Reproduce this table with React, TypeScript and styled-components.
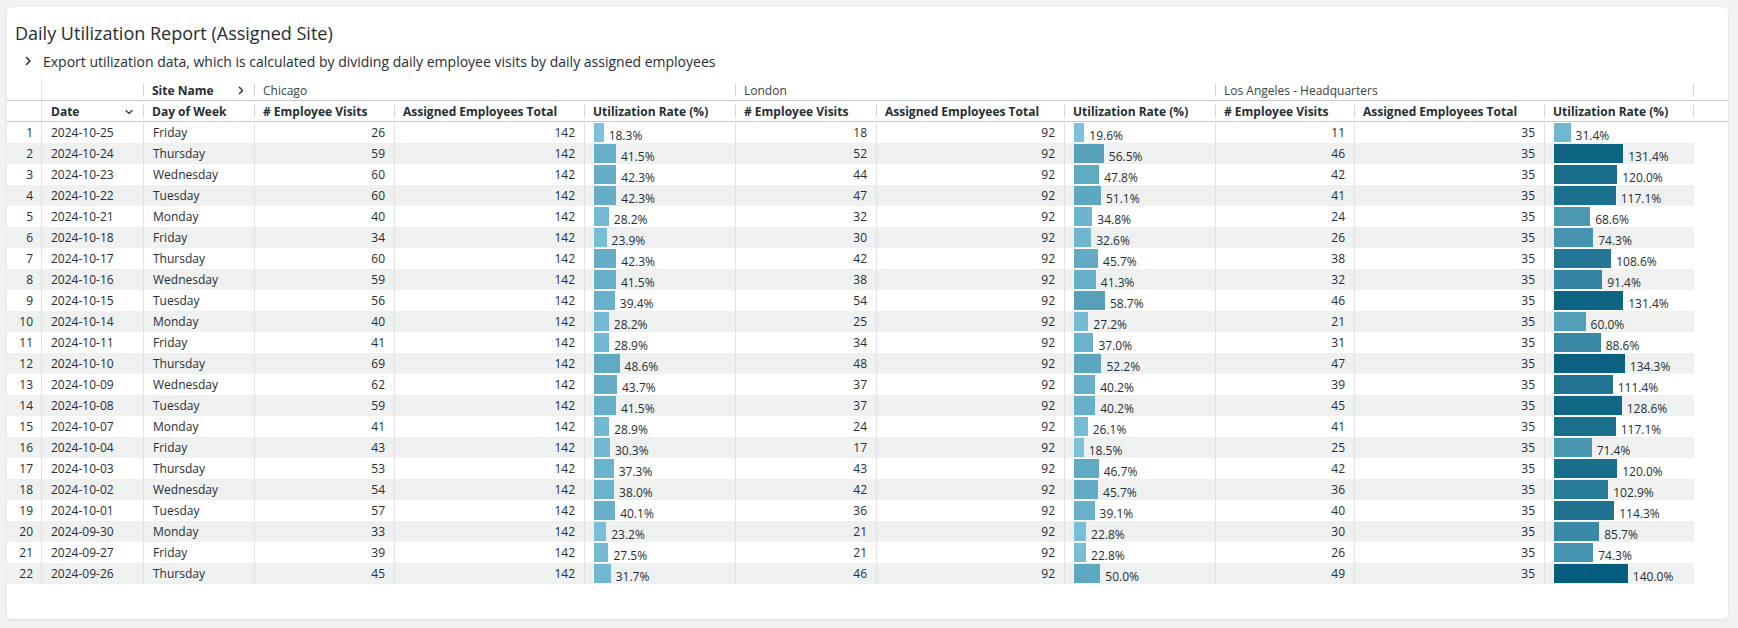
import React from 'react';
import styled, { createGlobalStyle } from 'styled-components';

type Row = {
  date: string;
  day: string;
  chicago: number;
  london: number;
  la: number;
};

const rows: Row[] = [
  { date: '2024-10-25', day: 'Friday', chicago: 26, london: 18, la: 11 },
  { date: '2024-10-24', day: 'Thursday', chicago: 59, london: 52, la: 46 },
  { date: '2024-10-23', day: 'Wednesday', chicago: 60, london: 44, la: 42 },
  { date: '2024-10-22', day: 'Tuesday', chicago: 60, london: 47, la: 41 },
  { date: '2024-10-21', day: 'Monday', chicago: 40, london: 32, la: 24 },
  { date: '2024-10-18', day: 'Friday', chicago: 34, london: 30, la: 26 },
  { date: '2024-10-17', day: 'Thursday', chicago: 60, london: 42, la: 38 },
  { date: '2024-10-16', day: 'Wednesday', chicago: 59, london: 38, la: 32 },
  { date: '2024-10-15', day: 'Tuesday', chicago: 56, london: 54, la: 46 },
  { date: '2024-10-14', day: 'Monday', chicago: 40, london: 25, la: 21 },
  { date: '2024-10-11', day: 'Friday', chicago: 41, london: 34, la: 31 },
  { date: '2024-10-10', day: 'Thursday', chicago: 69, london: 48, la: 47 },
  { date: '2024-10-09', day: 'Wednesday', chicago: 62, london: 37, la: 39 },
  { date: '2024-10-08', day: 'Tuesday', chicago: 59, london: 37, la: 45 },
  { date: '2024-10-07', day: 'Monday', chicago: 41, london: 24, la: 41 },
  { date: '2024-10-04', day: 'Friday', chicago: 43, london: 17, la: 25 },
  { date: '2024-10-03', day: 'Thursday', chicago: 53, london: 43, la: 42 },
  { date: '2024-10-02', day: 'Wednesday', chicago: 54, london: 42, la: 36 },
  { date: '2024-10-01', day: 'Tuesday', chicago: 57, london: 36, la: 40 },
  { date: '2024-09-30', day: 'Monday', chicago: 33, london: 21, la: 30 },
  { date: '2024-09-27', day: 'Friday', chicago: 39, london: 21, la: 26 },
  { date: '2024-09-26', day: 'Thursday', chicago: 45, london: 46, la: 49 },
];

const sites = [
  { key: 'chicago' as const, name: 'Chicago', assigned: 142 },
  { key: 'london' as const, name: 'London', assigned: 92 },
  { key: 'la' as const, name: 'Los Angeles - Headquarters', assigned: 35 },
];

const COLS =
  '35px 101px 111px 140px 190px 151px 141px 188px 151px 139px 190px 150px';

const LOW = [126, 194, 218];
const HIGH = [4, 93, 124];

const barColor = (pct: number) => {
  const t = Math.min(1, Math.max(0, (pct - 18.3) / (140 - 18.3)));
  const c = LOW.map((l, i) => Math.round(l + (HIGH[i] - l) * t));
  return `rgb(${c[0]}, ${c[1]}, ${c[2]})`;
};

const GlobalStyle = createGlobalStyle`
  html, body {
    margin: 0;
    padding: 0;
    background: #f1f2f4;
  }
  body {
    font-family: 'Open Sans', 'Noto Sans', sans-serif;
    color: #262d33;
  }
  * {
    box-sizing: border-box;
  }
`;

const Page = styled.div`
  padding: 7px;
  height: 628px;
`;

const Card = styled.div`
  width: 1721px;
  height: 612px;
  background: #ffffff;
  border-radius: 5px;
  box-shadow: 0 1px 3px rgba(30, 40, 50, 0.1);
  padding-top: 14px;
  overflow: hidden;
`;

const Title = styled.h1`
  margin: 0;
  padding-left: 8px;
  font-size: 18px;
  line-height: 24px;
  font-weight: 400;
  color: #262d33;
`;

const Description = styled.div`
  display: flex;
  align-items: center;
  gap: 11px;
  height: 24px;
  margin-top: 4px;
  padding-left: 18px;
  font-size: 14px;
  color: #262d33;
`;

const Table = styled.div`
  margin-top: 6px;
`;

const HeaderRow = styled.div<{ $height: number }>`
  display: grid;
  grid-template-columns: ${COLS} 1fr;
  height: ${({ $height }) => $height}px;
  border-bottom: 1px solid #c8cbce;
`;

const HeadCell = styled.div<{
  $span?: number;
  $sep?: boolean;
  $end?: boolean;
  $bold?: boolean;
  $rule?: boolean;
}>`
  position: relative;
  display: flex;
  align-items: center;
  justify-content: space-between;
  grid-column: span ${({ $span }) => $span ?? 1};
  padding: 1px 10px 0 9px;
  font-size: 12px;
  font-weight: ${({ $bold }) => ($bold ? 700 : 400)};
  color: ${({ $bold }) => ($bold ? '#262d33' : '#3b4247')};
  white-space: nowrap;
  border-right: ${({ $rule }) => ($rule ? '1px solid #dfe1e3' : 'none')};

  &::before {
    content: '';
    display: ${({ $sep }) => ($sep ? 'block' : 'none')};
    position: absolute;
    left: 0;
    top: 50%;
    width: 1px;
    height: 13px;
    transform: translateY(-50%);
    background: #d3d6d9;
  }

  &::after {
    content: '';
    display: ${({ $end }) => ($end ? 'block' : 'none')};
    position: absolute;
    right: 0;
    top: 50%;
    width: 1px;
    height: 13px;
    transform: translateY(-50%);
    background: #d3d6d9;
  }
`;

const BodyRow = styled.div<{ $striped: boolean }>`
  display: grid;
  grid-template-columns: ${COLS};
  width: 1687px;
  height: 21px;
  background: ${({ $striped }) => ($striped ? '#eff1f1' : 'transparent')};
`;

const Cell = styled.div<{ $align?: 'left' | 'right'; $rule?: boolean }>`
  display: flex;
  align-items: center;
  justify-content: ${({ $align }) =>
    $align === 'right' ? 'flex-end' : 'flex-start'};
  padding: 0 9px 0 9px;
  font-size: 12px;
  color: #262d33;
  white-space: nowrap;
  border-left: ${({ $rule }) => ($rule ? '1px solid #e0e2e4' : 'none')};
`;

const IndexCell = styled(Cell)`
  padding: 0 8px 0 0;
  border-right: 1px solid #dfe1e3;
`;

const BarCell = styled.div`
  display: flex;
  align-items: flex-end;
  padding-left: 9px;
  border-left: 1px solid #e0e2e4;
`;

const Bar = styled.div`
  height: 19px;
  margin-bottom: 1px;
  flex-shrink: 0;
`;

const BarLabel = styled.span`
  margin-left: 5px;
  font-size: 12px;
  line-height: 14px;
  color: #262d33;
`;

const ChevronRight = ({ size = 9 }: { size?: number }) => (
  <svg width={size * 0.7} height={size} viewBox="0 0 7 10" fill="none">
    <path
      d="M1.5 1.5L5 5L1.5 8.5"
      stroke="#262d33"
      strokeWidth="1.5"
      strokeLinecap="round"
      strokeLinejoin="round"
    />
  </svg>
);

const ChevronDown = () => (
  <svg width="8" height="6" viewBox="0 0 8 6" fill="none">
    <path
      d="M1 1.5L4 4.5L7 1.5"
      stroke="#3b4247"
      strokeWidth="1.3"
      strokeLinecap="round"
      strokeLinejoin="round"
    />
  </svg>
);

const UtilBar: React.FC<{ visits: number; assigned: number }> = ({
  visits,
  assigned,
}) => {
  const pct = (visits / assigned) * 100;
  return (
    <BarCell>
      <Bar style={{ width: pct * 0.527, background: barColor(pct) }} />
      <BarLabel>{pct.toFixed(1)}%</BarLabel>
    </BarCell>
  );
};

export default function App() {
  return (
    <>
      <GlobalStyle />
      <Page>
        <Card>
          <Title>Daily Utilization Report (Assigned Site)</Title>
          <Description>
            <ChevronRight size={10} />
            <span>
              Export utilization data, which is calculated by dividing daily
              employee visits by daily assigned employees
            </span>
          </Description>
          <Table>
            <HeaderRow $height={22}>
              <HeadCell $rule />
              <HeadCell />
              <HeadCell $sep $bold>
                Site Name
                <ChevronRight />
              </HeadCell>
              {sites.map((s, i) => (
                <HeadCell key={s.key} $span={3} $sep $end={i === sites.length - 1}>
                  {s.name}
                </HeadCell>
              ))}
              <HeadCell />
            </HeaderRow>
            <HeaderRow $height={21}>
              <HeadCell $rule />
              <HeadCell $bold>
                Date
                <ChevronDown />
              </HeadCell>
              <HeadCell $sep $bold>
                Day of Week
              </HeadCell>
              {sites.map((s, i) => (
                <React.Fragment key={s.key}>
                  <HeadCell $sep $bold>
                    # Employee Visits
                  </HeadCell>
                  <HeadCell $sep $bold>
                    Assigned Employees Total
                  </HeadCell>
                  <HeadCell $sep $bold $end={i === sites.length - 1}>
                    Utilization Rate (%)
                  </HeadCell>
                </React.Fragment>
              ))}
              <HeadCell />
            </HeaderRow>
            {rows.map((r, i) => (
              <BodyRow key={r.date} $striped={i % 2 === 1}>
                <IndexCell $align="right">{i + 1}</IndexCell>
                <Cell>{r.date}</Cell>
                <Cell $rule>{r.day}</Cell>
                {sites.map((s) => (
                  <React.Fragment key={s.key}>
                    <Cell $rule $align="right">
                      {r[s.key]}
                    </Cell>
                    <Cell $rule $align="right">
                      {s.assigned}
                    </Cell>
                    <UtilBar visits={r[s.key]} assigned={s.assigned} />
                  </React.Fragment>
                ))}
              </BodyRow>
            ))}
          </Table>
        </Card>
      </Page>
    </>
  );
}
